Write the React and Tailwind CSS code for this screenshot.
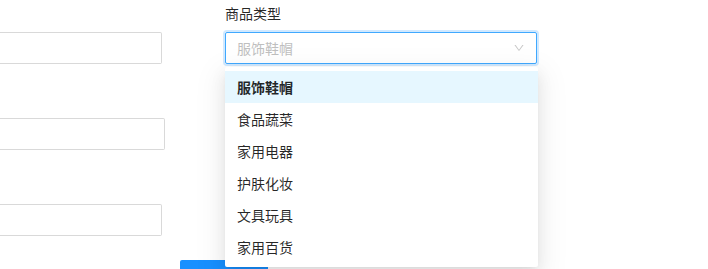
import React from "react";

const options = ["服饰鞋帽", "食品蔬菜", "家用电器", "护肤化妆", "文具玩具", "家用百货"];

export default function App() {
  return (
    <div
      className="relative h-[269px] w-[708px] overflow-hidden bg-white text-[14px] text-[rgba(0,0,0,0.85)]"
      style={{ fontFamily: '"Noto Sans CJK SC", "Noto Sans", sans-serif' }}
    >
      <div className="flex gap-[60px]">
        {/* left column, cut off by the viewport */}
        <div className="flex w-[165px] flex-col">
          <div className="h-[32px]" />
          <div className="h-[32px] w-[162px] rounded-r-[2px] border border-l-0 border-[#d9d9d9]" />
          <div className="h-[54px]" />
          <div className="h-[32px] w-[165px] rounded-r-[2px] border border-l-0 border-[#d9d9d9]" />
          <div className="h-[54px]" />
          <div className="h-[32px] w-[162px] rounded-r-[2px] border border-l-0 border-[#d9d9d9]" />
        </div>

        {/* right column */}
        <div className="flex w-[312px] flex-col">
          <div className="pt-[2px] pb-[8px] leading-[22px]">商品类型</div>
          <div className="relative">
            <div className="flex h-[32px] items-center justify-between rounded-[2px] border border-[#40a9ff] px-[11px] shadow-[0_0_0_2px_rgba(24,144,255,0.2)]">
              <span className="leading-[22px] text-[#bfbfbf]">服饰鞋帽</span>
              <svg width="12" height="12" viewBox="0 0 1024 1024" fill="#c8c8c8">
                <path d="M884 256h-75c-5.1 0-9.9 2.5-12.9 6.6L512 654.2 227.9 262.6c-3-4.1-7.8-6.6-12.9-6.6h-75c-6.5 0-10.3 7.4-6.5 12.7l352.6 486.1c12.8 17.6 39 17.6 51.7 0l352.6-486.1c3.9-5.3.1-12.7-6.4-12.7z" />
              </svg>
            </div>
            <div className="absolute left-0 top-[35px] z-10 w-[313px] rounded-[2px] bg-white py-[4px] shadow-[0_3px_6px_-4px_rgba(0,0,0,0.12),0_6px_16px_0_rgba(0,0,0,0.08),0_9px_28px_8px_rgba(0,0,0,0.05)]">
              {options.map((o, i) => (
                <div
                  key={o}
                  className={
                    i === 0
                      ? "bg-[#e6f7ff] px-[12px] py-[5px] font-semibold leading-[22px]"
                      : "px-[12px] py-[5px] leading-[22px]"
                  }
                >
                  {o}
                </div>
              ))}
            </div>
          </div>
        </div>
      </div>

      <div className="ml-[180px] mt-[24px] flex gap-2">
        <button className="h-[32px] w-[88px] rounded-[2px] bg-[#1890ff]" aria-label="提交" />
      </div>
    </div>
  );
}
